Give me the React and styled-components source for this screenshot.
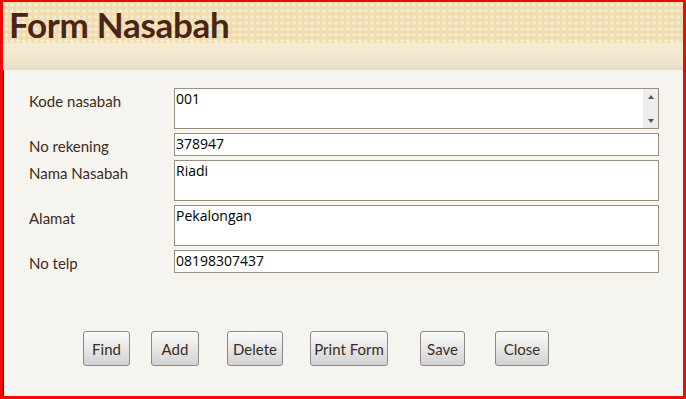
import React from 'react';
import styled, { createGlobalStyle } from 'styled-components';

const GlobalStyle = createGlobalStyle`
  html, body {
    margin: 0;
    padding: 0;
    background: #f6f4ee;
  }
  * { box-sizing: border-box; }
`

const Window = styled.div`
  width: 686px;
  height: 399px;
  border: 3px solid #ee0a0a;
  border-top-width: 2px;
  display: flex;
  flex-direction: column;
  background: #f6f4ee;
  overflow: hidden;
`
const TitleBand = styled.div`
  height: 41px;
  padding-left: 6px;
  display: flex;
  align-items: center;
  background-color: #efdcb1;
  background-image: radial-gradient(circle, rgba(255, 248, 225, 0.55) 1.5px, transparent 2px);
  background-size: 6px 6px;
`
const Title = styled.h1`
  margin: 0;
  padding-top: 2px;
  font-family: Lato, "Open Sans", sans-serif;
  font-weight: 700;
  font-size: 35px;
  letter-spacing: -0.3px;
  color: #4b2418;
`
const SubBand = styled.div`
  height: 27px;
  background: linear-gradient(#f6ecd2, #efe5cc 70%, #e4dcc5);
`
const Content = styled.div`
  flex: 1;
  border-left: 1px solid #4a2020;
  padding: 18px 0 0 25px;
  display: flex;
  flex-direction: column;
`
const FormGrid = styled.div`
  display: grid;
  grid-template-columns: 145px 485px;
  row-gap: 4px;
`
const Label = styled.div`
  font-family: Lato, "Open Sans", sans-serif;
  font-size: 15px;
  line-height: 20px;
  padding-top: 3px;
  color: #3d2b22;
`
const Field = styled.div`
  position: relative;
  height: ${p => (p.$tall ? '41px' : '23px')};
  background: #fff;
  border: 1px solid #9c8f7f;
  padding: 0 0 0 1px;
  font-family: "Open Sans", "Noto Sans", sans-serif;
  font-size: 14px;
  line-height: 19px;
  color: #000;
`
const Spinner = styled.div`
  position: absolute;
  top: 0;
  right: 0;
  bottom: 0;
  width: 15px;
  background: #ededed;
  display: flex;
  flex-direction: column;
  justify-content: space-between;
  align-items: center;
  padding: 6px 0 5px;
`
const Arrow = styled.span`
  width: 0;
  height: 0;
  border-left: 3px solid transparent;
  border-right: 3px solid transparent;
  ${p => (p.$down ? 'border-top: 4px solid #555;' : 'border-bottom: 4px solid #555;')}
`
const ButtonRow = styled.div`
  display: flex;
  margin-top: 58px;
  padding-left: 54px;
`
const Button = styled.button`
  width: ${p => p.$w}px;
  margin-left: ${p => p.$ml || 0}px;
  height: 35px;
  border: 1px solid #8a8a8a;
  border-radius: 3px;
  background: linear-gradient(#fafafa, #e9e9e9 45%, #d2d2d2);
  font-family: Lato, "Open Sans", sans-serif;
  font-size: 15px;
  color: #3d2b22;
  padding: 0;
`

const fields = [
  { label: 'Kode nasabah', value: '001', tall: true, spin: true },
  { label: 'No rekening', value: '378947' },
  { label: 'Nama Nasabah', value: 'Riadi', tall: true },
  { label: 'Alamat', value: 'Pekalongan', tall: true },
  { label: 'No telp', value: '08198307437' },
]

const buttons = [
  { text: 'Find', w: 47, ml: 0 },
  { text: 'Add', w: 48, ml: 21 },
  { text: 'Delete', w: 56, ml: 28 },
  { text: 'Print Form', w: 78, ml: 27 },
  { text: 'Save', w: 45, ml: 32 },
  { text: 'Close', w: 54, ml: 30 },
]

const App = () => {
  return (
    <>
      <GlobalStyle />
      <Window>
        <TitleBand>
          <Title>Form Nasabah</Title>
        </TitleBand>
        <SubBand />
        <Content>
          <FormGrid>
            {fields.map(f => (
              <React.Fragment key={f.label}>
                <Label>{f.label}</Label>
                <Field $tall={f.tall}>
                  {f.value}
                  {f.spin && (
                    <Spinner>
                      <Arrow />
                      <Arrow $down />
                    </Spinner>
                  )}
                </Field>
              </React.Fragment>
            ))}
          </FormGrid>
          <ButtonRow>
            {buttons.map(b => (
              <Button key={b.text} $w={b.w} $ml={b.ml}>{b.text}</Button>
            ))}
          </ButtonRow>
        </Content>
      </Window>
    </>
  );
}

export default App;
